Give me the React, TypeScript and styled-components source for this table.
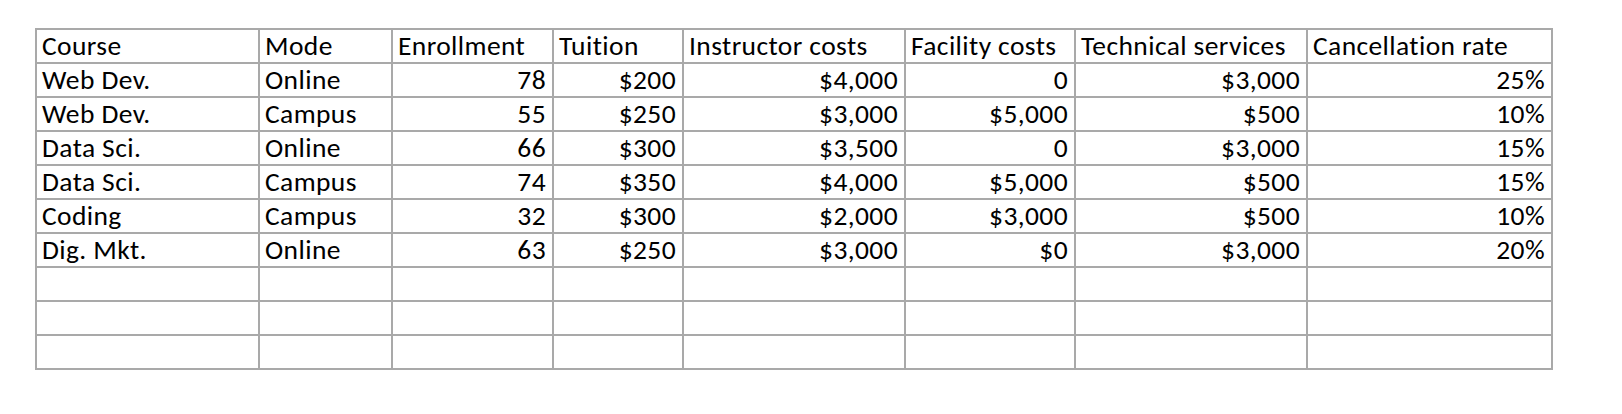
import React from "react";
import styled, { createGlobalStyle } from "styled-components";

const Global = createGlobalStyle`
  html, body { margin: 0; padding: 0; background: #ffffff; }
  body { font-family: Carlito, Calibri, Lato, "Liberation Sans", sans-serif; color: #000; }
`;

const Page = styled.div`
  padding: 28px 0 0 35px;
`;

const widths = [223, 133, 161, 130, 222, 170, 232, 245];

const Sheet = styled.div`
  display: grid;
  grid-template-columns: ${widths.map((w) => `${w}px`).join(" ")};
  grid-auto-rows: 34px;
  width: max-content;
  border-top: 2px solid #a9a9a9;
  border-left: 2px solid #a9a9a9;
`;

const Cell = styled.div<{ $align?: "left" | "right" }>`
  box-sizing: border-box;
  border-right: 2px solid #a9a9a9;
  border-bottom: 2px solid #a9a9a9;
  display: flex;
  align-items: center;
  justify-content: ${(p) => (p.$align === "right" ? "flex-end" : "flex-start")};
  padding: 0 6px 1px 5px;
  font-size: 27.5px;
  letter-spacing: 0.4px;
  line-height: 1;
  white-space: nowrap;
  overflow: hidden;
`;

const headers = [
  "Course",
  "Mode",
  "Enrollment",
  "Tuition",
  "Instructor costs",
  "Facility costs",
  "Technical services",
  "Cancellation rate",
];

const rows: string[][] = [
  ["Web Dev.", "Online", "78", "$200", "$4,000", "0", "$3,000", "25%"],
  ["Web Dev.", "Campus", "55", "$250", "$3,000", "$5,000", "$500", "10%"],
  ["Data Sci.", "Online", "66", "$300", "$3,500", "0", "$3,000", "15%"],
  ["Data Sci.", "Campus", "74", "$350", "$4,000", "$5,000", "$500", "15%"],
  ["Coding", "Campus", "32", "$300", "$2,000", "$3,000", "$500", "10%"],
  ["Dig. Mkt.", "Online", "63", "$250", "$3,000", "$0", "$3,000", "20%"],
  ["", "", "", "", "", "", "", ""],
  ["", "", "", "", "", "", "", ""],
  ["", "", "", "", "", "", "", ""],
];

export default function App() {
  return (
    <>
      <Global />
      <Page>
        <Sheet>
          {headers.map((h, i) => (
            <Cell key={`h${i}`}>{h}</Cell>
          ))}
          {rows.map((r, ri) =>
            r.map((v, ci) => (
              <Cell key={`${ri}-${ci}`} $align={ci >= 2 ? "right" : "left"}>
                {v}
              </Cell>
            ))
          )}
        </Sheet>
      </Page>
    </>
  );
}
